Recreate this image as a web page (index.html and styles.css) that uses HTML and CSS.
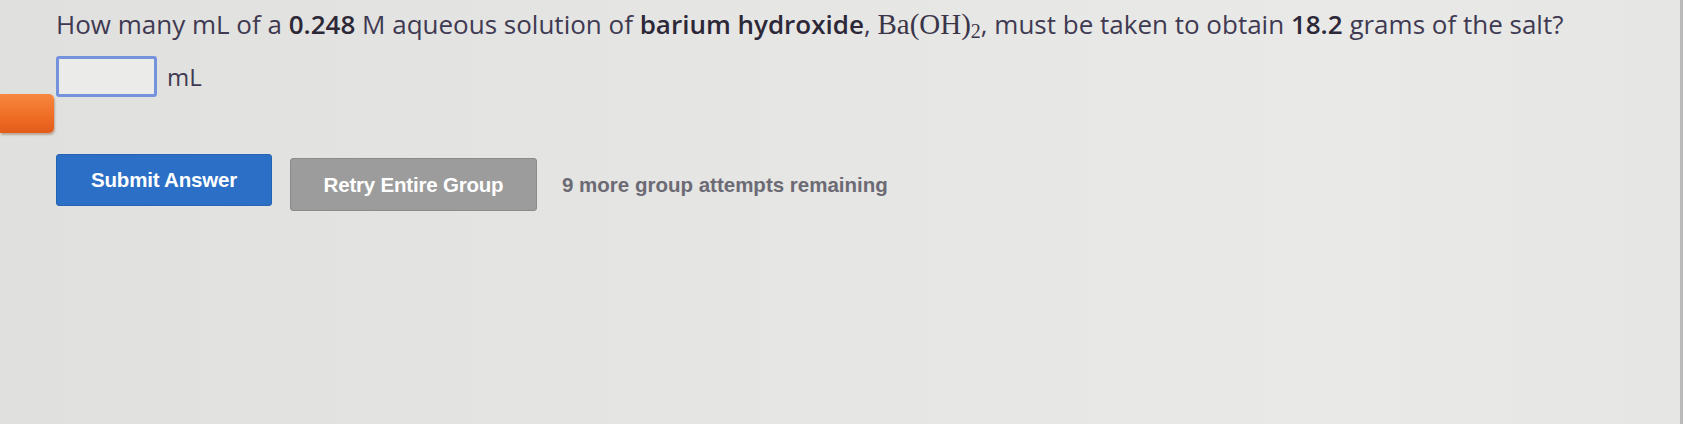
FILE: index.html
```html
<!DOCTYPE html>
<html>
<head>
<meta charset="utf-8">
<link rel="stylesheet" href="styles.css">
</head>
<body>
<div class="page">
  <p class="question">How many mL of a <b>0.248</b> M aqueous solution of <b>barium hydroxide</b>, <span class="math">Ba(OH)<sub>2</sub></span>, must be taken to obtain <b>18.2</b> grams of the salt?</p>
  <div class="answer-row">
    <span class="answer-box"></span>
    <span class="unit">mL</span>
  </div>
  <div class="side-tab"></div>
  <div class="actions">
    <button class="btn btn-submit">Submit Answer</button>
    <button class="btn btn-retry">Retry Entire Group</button>
    <span class="attempts">9 more group attempts remaining</span>
  </div>
</div>
</body>
</html>
```
FILE: styles.css
```css
html, body {
  margin: 0;
  padding: 0;
}
body {
  width: 1683px;
  height: 424px;
  overflow: hidden;
  background: linear-gradient(90deg, #e0e0de 0%, #e5e5e3 40%, #e9e9e7 80%, #e6e6e4 100%);
}
.page {
  height: 100%;
  box-sizing: border-box;
  border-right: 3px solid #b9b9b7;
  width: 1683px;
}
.question {
  margin: 0;
  padding: 6px 0 0 56px;
  font-family: "Open Sans", sans-serif;
  font-size: 26px;
  line-height: 36px;
  color: #3f3a52;
  white-space: nowrap;
}
.question b {
  font-weight: 600;
  color: #2c2838;
}
.math {
  font-family: "Liberation Serif", serif;
  font-size: 29px;
  color: #3a3548;
}
.math sub {
  font-size: 20px;
  vertical-align: -4px;
  line-height: 0;
}
.answer-row {
  display: flex;
  align-items: center;
  gap: 10px;
  padding-left: 56px;
  margin-top: 14px;
}
.answer-box {
  display: block;
  width: 101px;
  height: 41px;
  box-sizing: border-box;
  border: 3px solid #7592dc;
  border-radius: 3px;
  background: #ebebea;
}
.unit {
  font-family: "Open Sans", sans-serif;
  font-size: 24px;
  color: #3f3a52;
}
.side-tab {
  width: 54px;
  height: 39px;
  margin-top: -3px;
  border-radius: 0 5px 5px 0;
  background: linear-gradient(180deg, #f7883f 0%, #ef6c24 60%, #e25c1a 100%);
  box-shadow: 1px 2px 2px rgba(120, 60, 20, 0.35);
}
.actions {
  display: flex;
  align-items: center;
  padding-left: 56px;
  margin-top: 20px;
}
.btn {
  font-family: "Liberation Sans", Arial, sans-serif;
  font-weight: 700;
  font-size: 20.5px;
  color: #ffffff;
  border-radius: 3px;
  cursor: pointer;
  letter-spacing: -0.2px;
}
.btn-submit {
  width: 216px;
  height: 52px;
  background: #2b6fc6;
  border: 1px solid #2463b4;
  margin-top: -5px;
}
.btn-retry {
  width: 247px;
  height: 53px;
  margin-left: 18px;
  background: #9c9c9c;
  border: 1px solid #8b8b8b;
  margin-top: 5px;
}
.attempts {
  margin-left: 25px;
  margin-top: 6px;
  font-family: "Liberation Sans", Arial, sans-serif;
  font-weight: 700;
  font-size: 20.5px;
  color: #6c6a74;
}
```
